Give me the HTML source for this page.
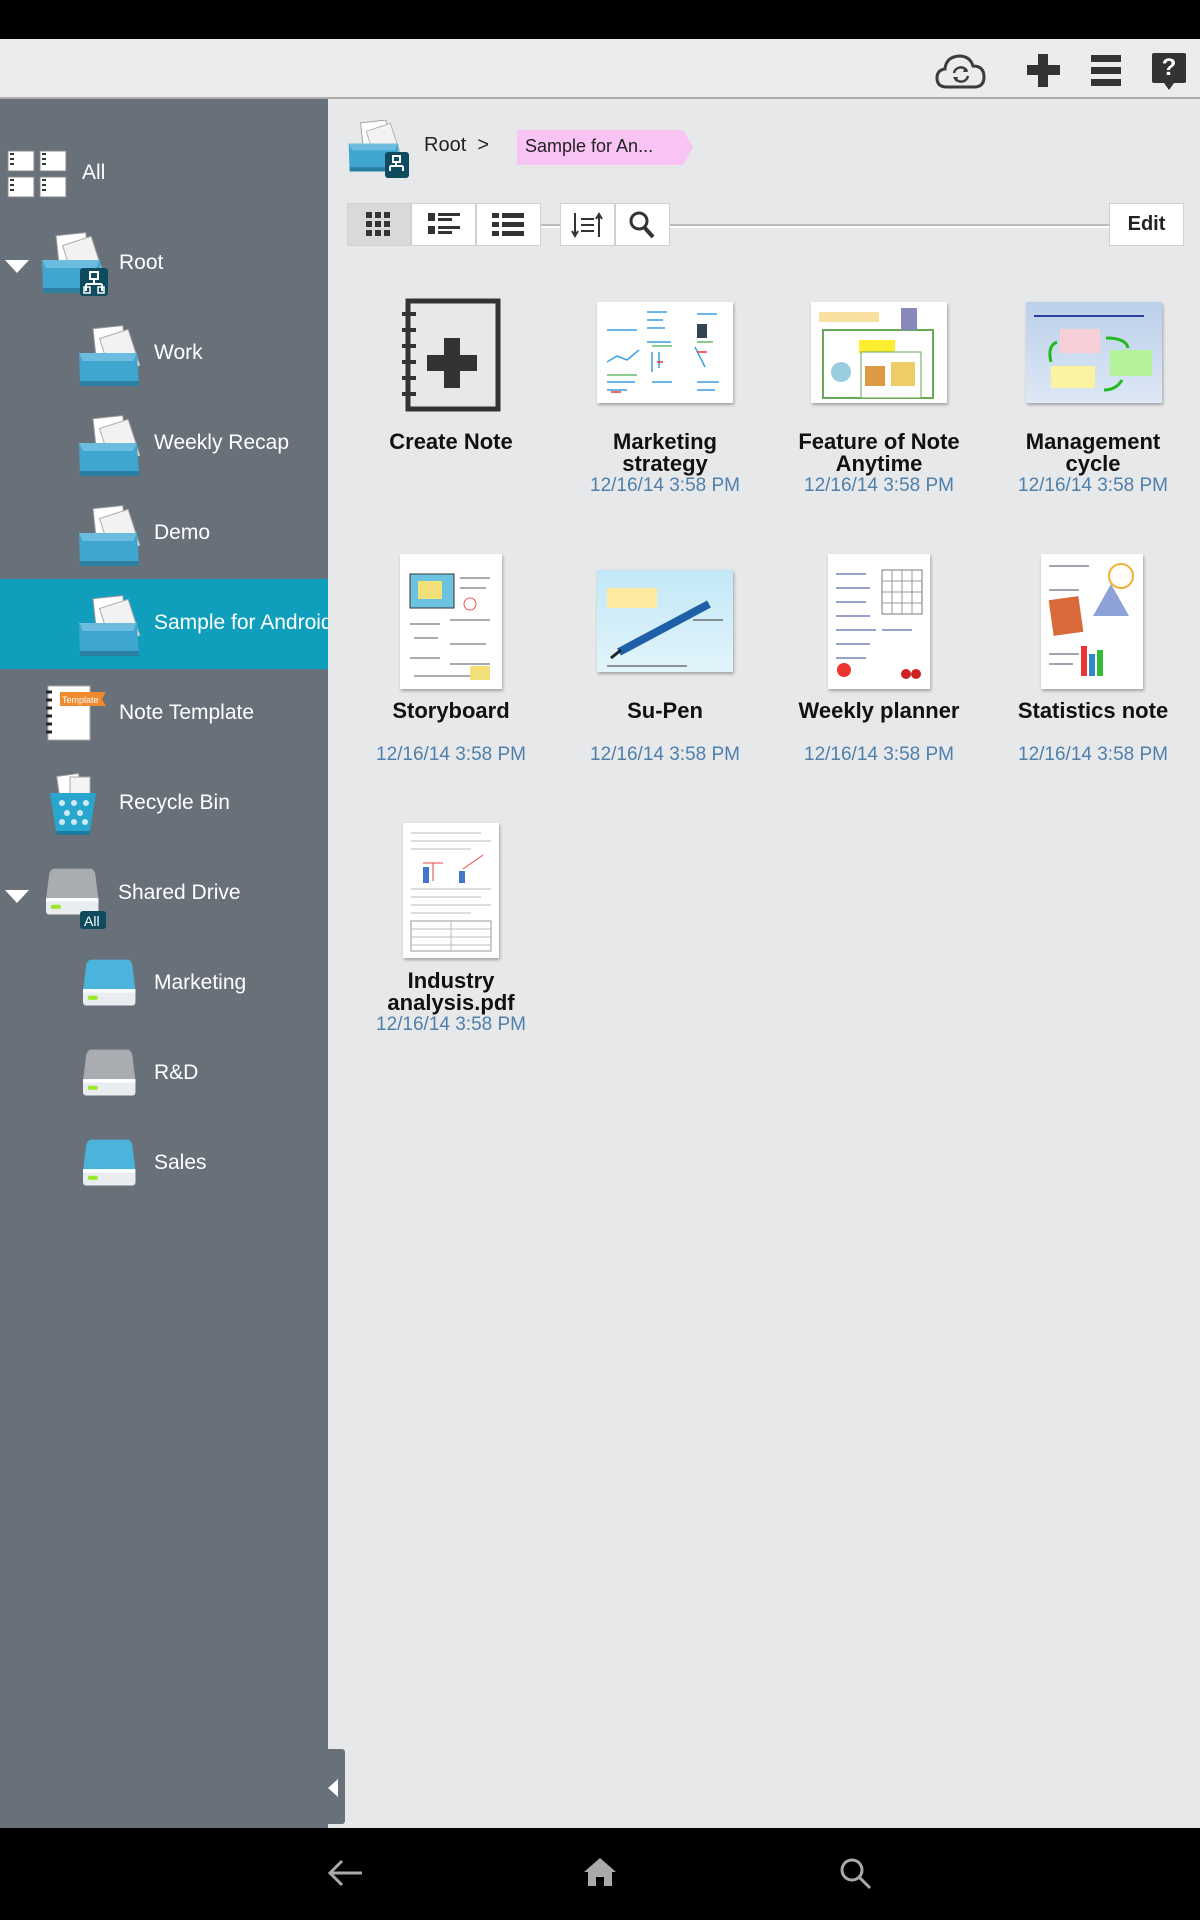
<!DOCTYPE html>
<html><head><meta charset="utf-8"><style>
*{margin:0;padding:0;box-sizing:border-box}
body{width:1200px;height:1920px;position:relative;background:#e7e8ea;font-family:"Liberation Sans",Arial,sans-serif;overflow:hidden}
.a{position:absolute}
.sb{left:0;top:99px;width:328px;height:1729px;background:#687079}
.it{position:absolute;color:#fff;font-size:21px;white-space:nowrap}
.tri{position:absolute;width:0;height:0;border-left:12px solid transparent;border-right:12px solid transparent;border-top:13px solid #fff}
.title{position:absolute;width:214px;text-align:center;font-weight:bold;font-size:22px;line-height:22px;color:#111}
.date{position:absolute;width:214px;text-align:center;font-size:19px;color:#4f7fab}
.th{position:absolute;background:#fff;box-shadow:1px 2px 3px rgba(0,0,0,.3);overflow:hidden}
.btn{position:absolute;top:203px;height:43px;background:#fff;border:1px solid #cfd0d2}
</style></head><body>
<svg width="0" height="0" style="position:absolute"><defs>
<g id="fold"><rect x="18" y="4" width="30" height="40" fill="#fff" stroke="#999" transform="rotate(-6 33 24)"/><rect x="28" y="10" width="30" height="38" fill="#f2f2f2" stroke="#aaa" transform="rotate(-18 43 30)"/><path d="M2 30 L60 30 L62 62 L3 62Z" fill="#3fa6cf"/><path d="M2 30 L60 30 L56 38 L6 38Z" fill="#7fc6e4" opacity=".7"/><path d="M3 58 L62 58 L62 63 L3 63Z" fill="#2b7fa3"/></g>
<g id="drv"><path d="M10 2 L54 2 Q58 2 60 8 L64 40 L0 40 L4 8 Q6 2 10 2Z" fill="currentColor"/><rect x="0" y="38" width="64" height="20" rx="4" fill="#e9edef"/><rect x="0" y="38" width="64" height="4" fill="#fff"/><rect x="6" y="46" width="12" height="5" rx="2" fill="#9be82a"/></g>
</defs></svg>
<div class="a" style="left:0;top:0;width:1200px;height:39px;background:#000"></div>
<div class="a" style="left:0;top:39px;width:1200px;height:60px;background:#ececec;border-bottom:2px solid #aaa"></div>
<!-- action icons -->
<svg class="a" style="left:935px;top:51px" width="52" height="40" viewBox="0 0 52 40"><path d="M12 36 Q2 36 2 27 Q2 19 10 18 Q11 6 24 5 Q35 5 38 15 Q49 15 49 26 Q49 36 39 36Z" fill="none" stroke="#3c3c3c" stroke-width="3"/><path d="M19 22 A7 7 0 0 1 32 20 M33 25 A7 7 0 0 1 20 27" fill="none" stroke="#3c3c3c" stroke-width="2.5"/><path d="M30 16 L33 21 L28 21Z M21 31 L18 26 L23 26Z" fill="#3c3c3c"/></svg>
<div class="a" style="left:1027px;top:56px;width:33px;height:10px;top:65px;background:#333"></div>
<div class="a" style="left:1038px;top:54px;width:10px;height:33px;background:#333"></div>
<div class="a" style="left:1091px;top:55px;width:30px;height:7px;background:#333"></div>
<div class="a" style="left:1091px;top:67px;width:30px;height:7px;background:#333"></div>
<div class="a" style="left:1091px;top:79px;width:30px;height:7px;background:#333"></div>
<div class="a" style="left:1152px;top:53px;width:34px;height:30px;background:#333;border-radius:2px;color:#fff;font-weight:bold;font-size:24px;text-align:center;line-height:30px">?</div>
<div class="a" style="left:1164px;top:83px;width:0;height:0;border-left:5px solid transparent;border-right:5px solid transparent;border-top:7px solid #333"></div>
<!-- sidebar -->
<div class="a sb"></div>
<div class="a" style="left:0;top:579px;width:328px;height:90px;background:#0f9fbd"></div>
<svg class="a" style="left:6px;top:150px" width="64" height="50"><g fill="#fff" stroke="#888"><rect x="2" y="1" width="26" height="20"/><rect x="34" y="1" width="26" height="20"/><rect x="2" y="27" width="26" height="20"/><rect x="34" y="27" width="26" height="20"/></g><g stroke="#333" stroke-width="2"><path d="M4 4h4M4 9h4M4 14h4M36 4h4M36 9h4M36 14h4M4 30h4M4 35h4M4 40h4M36 30h4M36 35h4M36 40h4"/></g></svg>
<div class="it" style="left:82px;top:161px">All</div>
<div class="tri" style="left:5px;top:260px"></div>
<svg class="a" style="left:40px;top:230px" width="70" height="68"><use href="#fold"/><rect x="40" y="38" width="28" height="28" rx="3" fill="#0e4b5e"/><path d="M50 42h8v7h-8zM54 49v5M46 54h16M46 54v7M62 54v7" stroke="#fff" stroke-width="2" fill="none"/><rect x="44" y="57" width="6" height="6" fill="none" stroke="#fff" stroke-width="1.5"/><rect x="58" y="57" width="6" height="6" fill="none" stroke="#fff" stroke-width="1.5"/></svg>
<div class="it" style="left:119px;top:251px">Root</div>
<svg class="a" style="left:77px;top:323px" width="66" height="66"><use href="#fold"/></svg>
<div class="it" style="left:154px;top:341px">Work</div>
<svg class="a" style="left:77px;top:413px" width="66" height="66"><use href="#fold"/></svg>
<div class="it" style="left:154px;top:431px">Weekly Recap</div>
<svg class="a" style="left:77px;top:503px" width="66" height="66"><use href="#fold"/></svg>
<div class="it" style="left:154px;top:521px">Demo</div>
<svg class="a" style="left:77px;top:593px" width="66" height="66"><use href="#fold"/></svg>
<div class="it" style="left:154px;top:611px;width:174px;overflow:hidden">Sample for Android</div>
<svg class="a" style="left:44px;top:684px" width="64" height="60"><rect x="4" y="2" width="42" height="54" fill="#fff" stroke="#aaa"/><path d="M2 8h6M2 16h6M2 24h6M2 32h6M2 40h6M2 48h6" stroke="#222" stroke-width="3"/><path d="M16 8h46l-4 7 4 7h-46z" fill="#f08a2c"/><text x="18" y="19" font-size="9" fill="#fff" font-family="Liberation Sans">Template</text></svg>
<div class="it" style="left:119px;top:701px">Note Template</div>
<svg class="a" style="left:48px;top:773px" width="52" height="62"><rect x="10" y="2" width="22" height="20" fill="#fff" stroke="#999" transform="rotate(-8 20 12)"/><rect x="22" y="4" width="20" height="18" fill="#f4f4f4" stroke="#aaa"/><path d="M2 20 L48 20 L42 58 L8 58Z" fill="#29a6cd"/><path d="M8 58 L42 58 L41 62 L9 62Z" fill="#1a7aa0"/><g fill="#cfeaf4"><circle cx="14" cy="30" r="3"/><circle cx="26" cy="30" r="3"/><circle cx="38" cy="30" r="3"/><circle cx="19" cy="40" r="3"/><circle cx="32" cy="40" r="3"/><circle cx="14" cy="49" r="3"/><circle cx="26" cy="49" r="3"/><circle cx="37" cy="49" r="3"/></g></svg>
<div class="it" style="left:119px;top:791px">Recycle Bin</div>
<div class="tri" style="left:5px;top:890px"></div>
<svg class="a" style="left:46px;top:867px;color:#a9adb2" width="62" height="62"><g transform="scale(.82)"><use href="#drv"/></g><rect x="34" y="44" width="26" height="18" rx="3" fill="#0e4b5e"/><text x="38" y="59" font-size="14" fill="#fff" font-family="Liberation Sans">All</text></svg>
<div class="it" style="left:118px;top:881px">Shared Drive</div>
<svg class="a" style="left:83px;top:958px;color:#4cb3dc" width="54" height="58"><g transform="scale(.82)"><use href="#drv"/></g></svg>
<div class="it" style="left:154px;top:971px">Marketing</div>
<svg class="a" style="left:83px;top:1048px;color:#a9adb2" width="54" height="58"><g transform="scale(.82)"><use href="#drv"/></g></svg>
<div class="it" style="left:154px;top:1061px">R&amp;D</div>
<svg class="a" style="left:83px;top:1138px;color:#4cb3dc" width="54" height="58"><g transform="scale(.82)"><use href="#drv"/></g></svg>
<div class="it" style="left:154px;top:1151px">Sales</div>
<div class="a" style="left:328px;top:1749px;width:17px;height:75px;background:#687079;border-radius:0 3px 3px 0"></div>
<div class="a" style="left:328px;top:1779px;width:0;height:0;border-top:9px solid transparent;border-bottom:9px solid transparent;border-right:10px solid #fff"></div>
<!-- breadcrumb -->
<svg class="a" style="left:347px;top:118px" width="66" height="62"><use href="#fold" transform="scale(.85)"/><rect x="38" y="34" width="24" height="26" rx="3" fill="#0e4b5e"/><path d="M46 38h7v6h-7zM49 44v4M43 48h13M43 48v5M56 48v5" stroke="#fff" stroke-width="2" fill="none"/></svg>
<div class="a" style="left:424px;top:134px;font-size:20px;color:#222">Root &nbsp;&gt;</div>
<svg class="a" style="left:517px;top:130px" width="178" height="36"><path d="M0 0 H166 L176 17 L166 35 H0Z" fill="#f9c4f4"/></svg>
<div class="a" style="left:525px;top:136px;font-size:18px;color:#222">Sample for An...</div>
<!-- toolbar -->
<div class="a" style="left:540px;top:224px;width:570px;height:2px;background:#bbb"></div>
<div class="a" style="left:540px;top:226px;width:570px;height:2px;background:#fff"></div>
<div class="btn" style="left:347px;width:64px;background:#d8d9db"></div>
<div class="btn" style="left:411px;width:65px"></div>
<div class="btn" style="left:476px;width:65px"></div>
<div class="btn" style="left:560px;width:55px"></div>
<div class="btn" style="left:615px;width:55px"></div>
<div class="btn" style="left:1109px;width:75px;font-size:20px;font-weight:bold;text-align:center;line-height:41px;color:#222">Edit</div>
<svg class="a" style="left:364px;top:210px" width="30" height="30" fill="#333"><rect x="2" y="2" width="6" height="6"/><rect x="11" y="2" width="6" height="6"/><rect x="20" y="2" width="6" height="6"/><rect x="2" y="11" width="6" height="6"/><rect x="11" y="11" width="6" height="6"/><rect x="20" y="11" width="6" height="6"/><rect x="2" y="20" width="6" height="6"/><rect x="11" y="20" width="6" height="6"/><rect x="20" y="20" width="6" height="6"/></svg>
<svg class="a" style="left:428px;top:210px" width="34" height="30" fill="#333"><rect x="0" y="3" width="7" height="8"/><rect x="10" y="3" width="22" height="3"/><rect x="10" y="8" width="14" height="3"/><rect x="0" y="16" width="7" height="8"/><rect x="10" y="16" width="22" height="3"/><rect x="10" y="21" width="14" height="3"/></svg>
<svg class="a" style="left:492px;top:210px" width="34" height="30" fill="#333"><rect x="0" y="3" width="7" height="5"/><rect x="10" y="3" width="22" height="5"/><rect x="0" y="12" width="7" height="5"/><rect x="10" y="12" width="22" height="5"/><rect x="0" y="21" width="7" height="5"/><rect x="10" y="21" width="22" height="5"/></svg>
<svg class="a" style="left:571px;top:210px" width="34" height="30" fill="none" stroke="#333" stroke-width="2"><path d="M4 3v22M1 21l3 5 3-5M28 27V5M25 9l3-5 3 5M10 9h13M10 15h13M10 21h13"/></svg>
<svg class="a" style="left:627px;top:210px" width="32" height="30" fill="none" stroke="#333" stroke-width="3"><circle cx="12" cy="11" r="8"/><path d="M17 17l9 10" stroke-width="4"/></svg>
<!-- grid -->
<svg class="a" style="left:402px;top:298px" width="100" height="114"><rect x="6" y="3" width="90" height="108" fill="none" stroke="#333" stroke-width="5"/><path d="M0 16h14M0 32h14M0 48h14M0 64h14M0 80h14M0 96h14" stroke="#333" stroke-width="4"/><rect x="42" y="40" width="16" height="50" fill="#333"/><rect x="25" y="57" width="50" height="16" fill="#333"/></svg>
<div class="title" style="left:344px;top:431px">Create Note</div>

<div class="th" style="left:597px;top:302px;width:136px;height:101px"><svg width="136" height="101"><g stroke-width="1.5" fill="none"><path d="M10 28h30M10 60l10-6 10 4 12-10M50 10h20M50 18h16M50 26h18M100 12h20M50 40h24M55 50v20M62 50v16M98 45l10 20M10 80h28M10 88h20M55 80h20M100 80h22M100 88h18" stroke="#3aa0e0"/><path d="M60 60h6M14 90h10M100 50h10" stroke="#e33"/><path d="M10 73h30M55 44h20M100 40h16" stroke="#6b6"/></g><rect x="100" y="22" width="10" height="14" fill="#345"/></svg></div>
<div class="title" style="left:558px;top:431px">Marketing<br>strategy</div>
<div class="date" style="left:558px;top:475px">12/16/14 3:58 PM</div>

<div class="th" style="left:811px;top:302px;width:136px;height:101px"><svg width="136" height="101"><rect x="8" y="10" width="60" height="10" fill="#f7e0a0"/><rect x="12" y="28" width="110" height="68" fill="none" stroke="#6a5" stroke-width="2"/><rect x="48" y="38" width="36" height="14" fill="#ffef30"/><rect x="50" y="50" width="60" height="46" fill="#fff" stroke="#6a5"/><circle cx="30" cy="70" r="10" fill="#9cd"/><rect x="54" y="64" width="20" height="20" fill="#d94"/><rect x="80" y="60" width="24" height="24" fill="#ec6"/><rect x="90" y="6" width="16" height="22" fill="#88b"/></svg></div>
<div class="title" style="left:772px;top:431px">Feature of Note<br>Anytime</div>
<div class="date" style="left:772px;top:475px">12/16/14 3:58 PM</div>

<div class="th" style="left:1026px;top:302px;width:136px;height:101px;background:linear-gradient(#bcd0ea,#dde8f5)"><svg width="136" height="101"><path d="M8 14h110" stroke="#2a3ea0" stroke-width="2"/><rect x="34" y="27" width="40" height="24" fill="#f7cfd6"/><rect x="84" y="48" width="42" height="26" fill="#b4f39a"/><rect x="25" y="64" width="44" height="22" fill="#fbf3a0"/><path d="M80 36q20 0 22 10M25 60q-4-16 6-20M96 78q-6 10-18 10" stroke="#2b2" stroke-width="3" fill="none"/></svg></div>
<div class="title" style="left:986px;top:431px">Management<br>cycle</div>
<div class="date" style="left:986px;top:475px">12/16/14 3:58 PM</div>

<div class="th" style="left:400px;top:554px;width:102px;height:135px"><svg width="102" height="135"><rect x="10" y="20" width="44" height="34" fill="#6cc3df" stroke="#333"/><rect x="18" y="27" width="24" height="18" fill="#f4e07a"/><path d="M60 24h30M60 34h26M10 70h30M50 66h40M14 84h24M50 90h36M10 104h30M50 110h40M14 122h70" stroke="#555" fill="none"/><circle cx="70" cy="50" r="6" fill="none" stroke="#e55"/><rect x="70" y="112" width="20" height="14" fill="#f4e07a"/></svg></div>
<div class="title" style="left:344px;top:700px">Storyboard</div>
<div class="date" style="left:344px;top:744px">12/16/14 3:58 PM</div>

<div class="th" style="left:597px;top:570px;width:136px;height:102px;background:linear-gradient(#c2e8f7,#e2f4fb)"><svg width="136" height="102"><path d="M22 82 L112 34" stroke="#1e5fa8" stroke-width="8"/><path d="M14 88l10-8" stroke="#222" stroke-width="3"/><rect x="10" y="18" width="50" height="20" fill="#ffeaa0"/><path d="M10 96h80M96 50h30" stroke="#333"/></svg></div>
<div class="title" style="left:558px;top:700px">Su-Pen</div>
<div class="date" style="left:558px;top:744px">12/16/14 3:58 PM</div>

<div class="th" style="left:828px;top:554px;width:102px;height:135px"><svg width="102" height="135"><rect x="54" y="16" width="40" height="44" fill="none" stroke="#777"/><path d="M54 27h40M54 38h40M54 49h40M64 16v44M74 16v44M84 16v44" stroke="#999"/><path d="M8 20h30M8 34h34M8 48h30M8 62h34M8 76h40M8 90h34M8 104h30M54 76h30" stroke="#3040a0"/><circle cx="16" cy="116" r="7" fill="#e33"/><circle cx="78" cy="120" r="5" fill="#c22"/><circle cx="88" cy="120" r="5" fill="#c22"/></svg></div>
<div class="title" style="left:772px;top:700px">Weekly planner</div>
<div class="date" style="left:772px;top:744px">12/16/14 3:58 PM</div>

<div class="th" style="left:1041px;top:554px;width:102px;height:135px"><svg width="102" height="135"><path d="M8 12h40M8 36h30M8 100h30M8 110h24" stroke="#446"/><rect x="10" y="44" width="30" height="36" fill="#d86a3a" transform="rotate(-8 25 62)"/><path d="M52 62 L70 30 L88 62Z" fill="#8fa2d8"/><rect x="40" y="92" width="6" height="30" fill="#e33"/><rect x="48" y="100" width="6" height="22" fill="#38c"/><rect x="56" y="96" width="6" height="26" fill="#3b3"/><circle cx="80" cy="22" r="12" fill="none" stroke="#f0b030" stroke-width="2"/></svg></div>
<div class="title" style="left:986px;top:700px">Statistics note</div>
<div class="date" style="left:986px;top:744px">12/16/14 3:58 PM</div>

<div class="th" style="left:403px;top:823px;width:96px;height:135px"><svg width="96" height="135"><path d="M8 10h70M8 18h80M8 26h60M8 66h80M8 74h70M8 82h80M8 90h60" stroke="#bbb"/><path d="M20 40h20M30 40v18M60 46l20-14" stroke="#e44"/><rect x="20" y="44" width="6" height="16" fill="#4477cc"/><rect x="56" y="48" width="6" height="12" fill="#4477cc"/><rect x="8" y="98" width="80" height="30" fill="none" stroke="#999"/><path d="M8 106h80M8 114h80M8 122h80M48 98v30" stroke="#bbb"/></svg></div>
<div class="title" style="left:344px;top:970px">Industry<br>analysis.pdf</div>
<div class="date" style="left:344px;top:1014px">12/16/14 3:58 PM</div>

<!-- nav bar -->
<div class="a" style="left:0;top:1828px;width:1200px;height:92px;background:#000"></div>
<svg class="a" style="left:326px;top:1858px" width="38" height="30" fill="none" stroke="#aaa" stroke-width="3"><path d="M36 15H4M16 3L4 15l12 12"/></svg>
<svg class="a" style="left:582px;top:1856px" width="36" height="32" fill="#aaa"><path d="M18 2 L34 16 L30 16 L30 30 L22 30 L22 21 L14 21 L14 30 L6 30 L6 16 L2 16Z"/></svg>
<svg class="a" style="left:838px;top:1856px" width="36" height="34" fill="none" stroke="#aaa" stroke-width="3"><circle cx="14" cy="14" r="10"/><path d="M21 21l11 11"/></svg>
</body></html>
